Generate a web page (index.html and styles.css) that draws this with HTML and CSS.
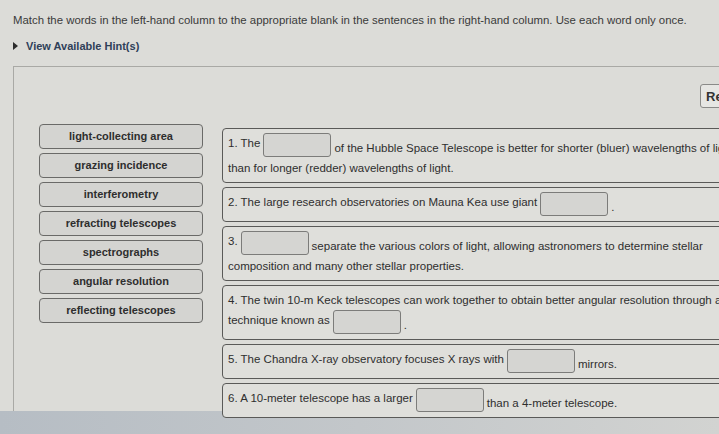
FILE: index.html
```html
<!DOCTYPE html>
<html lang="en">
<head>
<meta charset="utf-8">
<title>Matching</title>
<link rel="stylesheet" href="styles.css">
</head>
<body>
<div class="page">
  <p class="title">Match the words in the left-hand column to the appropriate blank in the sentences in the right-hand column. Use each word only once.</p>
  <div class="hint"><span class="tri"></span>View Available Hint(s)</div>
  <div class="panel">
    <div class="toolbar"><button class="reset">Reset</button></div>
    <div class="content">
      <div class="words">
        <div class="tile">light-collecting area</div>
        <div class="tile">grazing incidence</div>
        <div class="tile">interferometry</div>
        <div class="tile">refracting telescopes</div>
        <div class="tile">spectrographs</div>
        <div class="tile">angular resolution</div>
        <div class="tile">reflecting telescopes</div>
      </div>
      <div class="sentences">
        <div class="sentence"><span class="lead">1. The</span><span class="blank"></span><span>of the Hubble Space Telescope is better for shorter (bluer) wavelengths of light than for longer (redder) wavelengths of light.</span></div>
        <div class="sentence"><span class="lead">2. The large research observatories on Mauna Kea use giant</span><span class="blank"></span><span>.</span></div>
        <div class="sentence"><span class="lead">3.</span><span class="blank"></span><span>separate the various colors of light, allowing astronomers to determine stellar composition and many other stellar properties.</span></div>
        <div class="sentence"><span class="lead">4. The twin 10-m Keck telescopes can work together to obtain better angular resolution through a technique known as</span><span class="blank"></span><span>.</span></div>
        <div class="sentence"><span class="lead">5. The Chandra X-ray observatory focuses X rays with</span><span class="blank"></span><span>mirrors.</span></div>
        <div class="sentence"><span class="lead">6. A 10-meter telescope has a larger</span><span class="blank"></span><span>than a 4-meter telescope.</span></div>
      </div>
    </div>
  </div>
  <div class="band"></div>
</div>
</body>
</html>
```

FILE: styles.css
```css
html, body {
  margin: 0;
  padding: 0;
}
body {
  width: 719px;
  height: 434px;
  overflow: hidden;
  background: #dcdcd8;
  font-family: "Liberation Sans", Arial, sans-serif;
  font-size: 11.5px;
  color: #333;
}
.page {
  padding-top: 13px;
}
.title {
  margin: 0 0 0 13px;
  font-size: 11.4px;
  line-height: 14px;
  white-space: nowrap;
  color: #3a3a3a;
}
.hint {
  margin: 12px 0 0 13px;
  line-height: 14px;
  font-size: 11px;
  font-weight: bold;
  color: #2f4058;
  display: flex;
  align-items: center;
  gap: 8px;
}
.tri {
  width: 0;
  height: 0;
  border-top: 4px solid transparent;
  border-bottom: 4px solid transparent;
  border-left: 5px solid #2c2c2c;
}
.panel {
  margin: 13px 0 0 13px;
  width: 760px;
  height: 345px;
  border-top: 1px solid #a9a9a5;
  border-left: 1px solid #a9a9a5;
  box-sizing: border-box;
}
.toolbar {
  display: flex;
  justify-content: flex-end;
  padding: 17px 10px 0 0;
}
.reset {
  width: 63px;
  height: 24px;
  padding: 0 0 0 5px;
  text-align: left;
  font-family: "Liberation Sans", Arial, sans-serif;
  font-size: 13px;
  font-weight: bold;
  color: #333;
  background: #e6e6e3;
  border: 1px solid #8a8a88;
  border-radius: 3px;
}
.content {
  display: flex;
  gap: 19px;
  padding: 16px 0 0 25px;
}
.words {
  width: 164px;
  display: flex;
  flex-direction: column;
  gap: 4px;
  flex: none;
}
.tile {
  height: 25px;
  box-sizing: border-box;
  border: 1.5px solid #6a6a68;
  border-radius: 4px;
  background: #d4d4d1;
  text-align: center;
  line-height: 22px;
  font-size: 11px;
  font-weight: bold;
  color: #2e2e2e;
}
.sentences {
  width: 530px;
  margin-top: 4px;
  display: flex;
  flex-direction: column;
  gap: 4px;
  flex: none;
}
.sentence {
  border: 1.5px solid #5a5a58;
  border-radius: 4px;
  padding: 4px 5px 4px 5px;
  line-height: 20px;
  color: #2e2e2e;
  background: #dfdfdb;
}
.lead {
  vertical-align: top;
}
.blank {
  display: inline-block;
  width: 66px;
  height: 22px;
  border: 1px solid #7c7c7a;
  border-radius: 3px;
  background: #d5d5d2;
  vertical-align: -5px;
  margin: 0 3px;
}
.band {
  height: 40px;
  background: linear-gradient(to right, #b6bdc4, #c3c7ca 50%, #d2d3d1);
}
```
